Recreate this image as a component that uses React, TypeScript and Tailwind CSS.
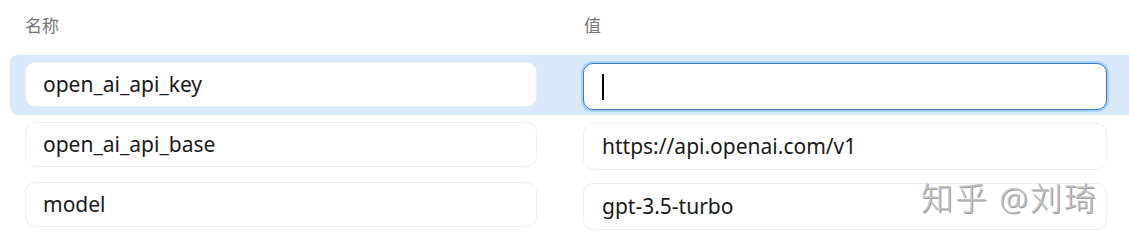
import React from 'react'

const rows = [
  { name: 'open_ai_api_key', value: '', active: true },
  { name: 'open_ai_api_base', value: 'https://api.openai.com/v1', active: false },
  { name: 'model', value: 'gpt-3.5-turbo', active: false },
  { name: '', value: '', active: false },
]

const font = { fontFamily: '"Noto Sans", "Noto Sans CJK SC", sans-serif' }

function Row({ name, value, active }: { name: string, value: string, active: boolean }) {
  return (
    <div
      className={`ml-[10px] h-[60px] pl-[15px] pr-[22px] rounded-l-[8px] grid grid-cols-[512px_1fr] gap-x-[46px] ${active ? 'bg-[#d9e8fb]' : 'bg-white'}`}
    >
      <div className="pt-[7px]">
        <div className="h-[45px] rounded-[10px] border border-[#eeeeee] bg-white px-[17px] flex items-center text-[21px] text-[#1a1a1a]">
          {name}
        </div>
      </div>
      <div className="pt-[8px]">
        {active ? (
          <div className="h-[47px] rounded-[10px] border border-[#3a78bd] shadow-[0_0_0_2px_#a9d1f9] bg-white px-[18px] flex items-center">
            <span className="w-[2px] h-[26px] bg-black" />
          </div>
        ) : (
          <div className="h-[47px] rounded-[10px] border border-[#eeeeee] bg-white px-[18px] flex items-center text-[21px] text-[#1a1a1a]">
            {value}
          </div>
        )}
      </div>
    </div>
  )
}

export default function App() {
  return (
    <div className="relative w-[1129px] h-[241px] overflow-hidden bg-white" style={font}>
      <div className="h-[55px] pl-[25px] pr-[22px] grid grid-cols-[512px_1fr] gap-x-[46px] pt-[14px] text-[17px] leading-[24px] text-[#777777]">
        <div>名称</div>
        <div className="pl-[1px]">值</div>
      </div>
      {rows.map((r, i) => (
        <Row key={i} name={r.name} value={r.value} active={r.active} />
      ))}
      <div className="absolute left-[921px] top-[179px] text-[32px] leading-[38px] tracking-[2px] font-light text-[#c2c2c2] [text-shadow:1px_1px_0_#9a9a9a]">
        知乎 @刘琦
      </div>
    </div>
  )
}
